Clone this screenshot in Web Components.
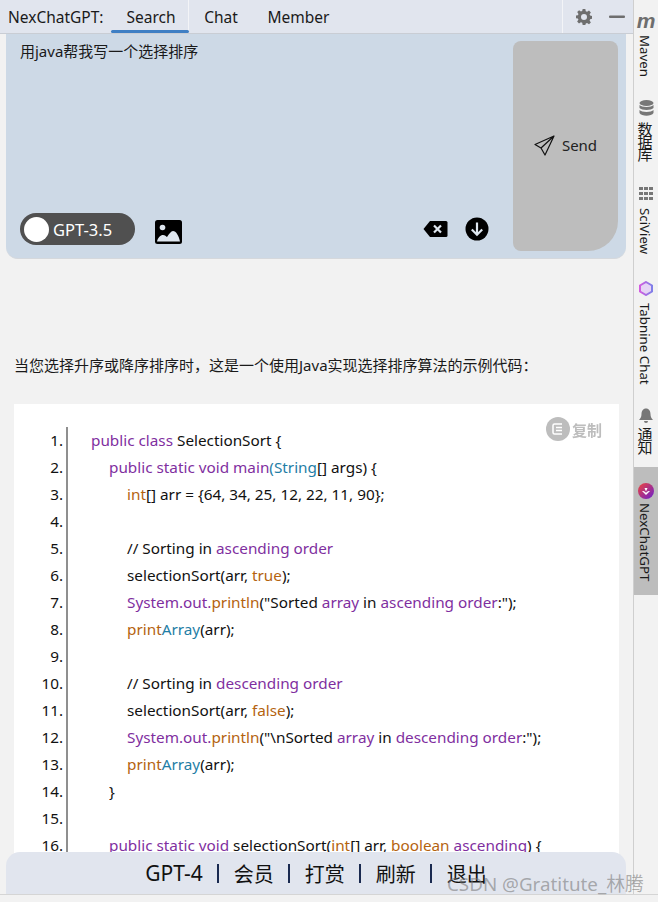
<!DOCTYPE html>
<html>
<head>
<meta charset="utf-8">
<style>
html, body { margin: 0; height: 100%; overflow: hidden; }
</style>
</head>
<body>
<nex-app></nex-app>
<script>
const FONT = '"Noto Sans", "Noto Sans CJK SC", sans-serif';

class NexHeader extends HTMLElement {
    constructor() {
        super();
        this.attachShadow({ mode: 'open' }).innerHTML = `<style>
            :host { display: flex; align-items: center; height: 33px; background: #e1e5ee; border-bottom: 1px solid #c9cdd4; font-size: 15.5px; color: #1a1a1a; flex: none; }
            .brand { padding-left: 8px; width: 103px; white-space: nowrap; }
            .tab { position: relative; height: 33px; display: flex; align-items: center; justify-content: center; box-sizing: border-box; }
            .search { width: 78px; padding-left: 3px; border-right: 1px solid #f3f4f7; }
            .search::after { content: ''; position: absolute; left: 0; right: -1px; bottom: 0; height: 3px; border-radius: 2px; background: #3f7fc4; }
            .chat { width: 64px; }
            .member { width: 91px; }
            .tools { margin-left: auto; height: 33px; width: 71px; border-left: 1px solid #f3f4f7; display: flex; align-items: center; gap: 17px; padding-left: 13px; box-sizing: border-box; }
        </style>
        <span class="brand">NexChatGPT:</span>
        <span class="tab search">Search</span>
        <span class="tab chat">Chat</span>
        <span class="tab member">Member</span>
        <div class="tools">
            <svg width="16" height="16" viewBox="0 0 24 24" fill="#6e6e6e"><path fill-rule="evenodd" d="M10 0h4l.7 3.400 1.900.8 2.900-1.900 2.800 2.800-1.900 2.900.8 1.900 3.400.7v4l-3.400.7-.8 1.900 1.900 2.900-2.800 2.800-2.900-1.900-1.900.8L14 24h-4l-.7-3.400-1.900-.8-2.900 1.900-2.800-2.800 1.900-2.900-.8-1.900L-.5 14v-4l3.400-.7.8-1.900-1.900-2.900 2.800-2.800 2.900 1.900 1.900-.8zM12 7.500a4.500 4.500 0 1 0 0 9 4.500 4.500 0 0 0 0-9z"/></svg>
            <svg width="16" height="4" viewBox="0 0 16 4"><rect width="16" height="2.500" y=".5" rx="1" fill="#6e6e6e"/></svg>
        </div>`;
    }
}

class NexComposer extends HTMLElement {
    constructor() {
        super();
        this.attachShadow({ mode: 'open' }).innerHTML = `<style>
            :host { display: flex; height: 225px; margin: 0 7px 0 6px; background: #cdd9e6; border-radius: 0 0 12px 12px; border-bottom: 1px solid #d5d8dc; box-sizing: border-box; padding: 7px 8px 7px 14px; flex: none; }
            .left { flex: 1; display: flex; flex-direction: column; min-width: 0; }
            .prompt { font-size: 15px; line-height: 20px; color: #1a1a1a; flex: 1; }
            .actions { display: flex; align-items: center; height: 32px; margin-bottom: 6px; }
            .switch { width: 115px; height: 32px; border-radius: 16px; background: #505050; color: #fff; font-size: 16.5px; display: flex; align-items: center; gap: 4px; padding-left: 4px; box-sizing: border-box; }
            .knob { width: 25px; height: 25px; background: #fff; border-radius: 50%; flex: none; }
            .pic { margin: 6px 0 0 20px; display: block; }
            .right { margin-left: auto; display: flex; align-items: center; gap: 17px; margin-right: 24px; }
            .send { width: 105px; padding-bottom: 2px; box-sizing: border-box; background: #bdbdbd; border-radius: 8px 8px 30px 8px; display: flex; align-items: center; justify-content: center; gap: 7px; font-size: 15px; color: #222; }
        </style>
        <div class="left">
            <div class="prompt">用java帮我写一个选择排序</div>
            <div class="actions">
                <div class="switch"><span class="knob"></span><span>GPT-3.5</span></div>
                <svg class="pic" width="27" height="24" viewBox="0 0 27 24"><rect width="27" height="24" rx="2.500" fill="#000"/><circle cx="7.500" cy="7.500" r="2.800" fill="#dfe7f0"/><path d="M2 21.500c1-4 3.500-6.500 6-6.500 2 0 3 1.500 4 2 2-3 4-6 6-6 3 0 6 5 7 10.500z" fill="#dfe7f0"/></svg>
                <div class="right">
                    <svg width="25" height="18" viewBox="0 0 25 18"><path d="M7 1h16a1.500 1.500 0 0 1 1.500 1.500v13A1.500 1.500 0 0 1 23 17H7L.5 9z" fill="#000"/><path d="M11 5.500l7 7M18 5.500l-7 7" stroke="#dfe7f0" stroke-width="2.200"/></svg>
                    <svg width="24" height="24" viewBox="0 0 24 24"><circle cx="12" cy="12" r="11.500" fill="#000"/><path d="M12 5.500v12M6.800 12.500l5.200 5.200 5.200-5.200" fill="none" stroke="#dfe7f0" stroke-width="2.200"/></svg>
                </div>
            </div>
        </div>
        <div class="send">
            <svg width="21" height="21" viewBox="0 0 21 21" fill="none" stroke="#111" stroke-width="1.200" stroke-linejoin="round"><path d="M20 1L1 9.500l6 3.500 4 7zM20 1L7 13"/></svg>
            <span>Send</span>
        </div>`;
    }
}

const KW = 'k', TY = 't', CL = 'c';
const CODE = [
    [0, [[KW, 'public class'], ['', ' SelectionSort {']]],
    [1, [[KW, 'public static void main'], [CL, '(String'], ['', '[] args) {']]],
    [2, [[TY, 'int'], ['', '[] arr = {64, 34, 25, 12, 22, 11, 90};']]],
    [0, []],
    [2, [['', '// Sorting in '], [KW, 'ascending order']]],
    [2, [['', 'selectionSort(arr, '], [TY, 'true'], ['', ');']]],
    [2, [[KW, 'System.out.'], [TY, 'println'], ['', '("Sorted '], [KW, 'array'], ['', ' in '], [KW, 'ascending order'], ['', ':");']]],
    [2, [[TY, 'print'], [CL, 'Array'], ['', '(arr);']]],
    [0, []],
    [2, [['', '// Sorting in '], [KW, 'descending order']]],
    [2, [['', 'selectionSort(arr, '], [TY, 'false'], ['', ');']]],
    [2, [[KW, 'System.out.'], [TY, 'println'], ['', '("\\nSorted '], [KW, 'array'], ['', ' in '], [KW, 'descending order'], ['', ':");']]],
    [2, [[TY, 'print'], [CL, 'Array'], ['', '(arr);']]],
    [1, [['', '}']]],
    [0, []],
    [1, [[KW, 'public static void'], ['', ' selectionSort('], [TY, 'int'], ['', '[] arr, '], [TY, 'boolean'], ['', ' '], [KW, 'ascending'], ['', ') {']]]
];

class NexCode extends HTMLElement {
    constructor() {
        super();
        const rows = CODE.map(row => {
            const spans = row[1].map(s => `<span class="${s[0]}">${s[1]}</span>`).join('');
            return `<li style="--indent:${row[0]}">${spans}</li>`;
        }).join('');
        this.attachShadow({ mode: 'open' }).innerHTML = `<style>
            :host { display: block; position: relative; background: #fff; margin: 0 14px; padding: 23px 0 0 0; font-size: 15.3px; color: #111; }
            ol { margin: 0 0 0 52px; padding: 0; border-left: 2px solid #8f8f8f; list-style: none; counter-reset: ln; }
            li { counter-increment: ln; height: 27px; line-height: 27px; padding-left: calc(23px + var(--indent) * 18px); position: relative; white-space: pre; }
            li::before { content: counter(ln) "."; position: absolute; right: calc(100% + 5px); }
            .k { color: #7f2f9f; } .t { color: #b4630f; } .c { color: #1f7ea6; }
            .copy { position: absolute; top: 13px; right: 17px; display: flex; align-items: center; gap: 2px; color: #bdbdbd; font-size: 15px; font-weight: 700; filter: blur(.5px); }
        </style>
        <div class="copy">
            <svg width="24" height="24" viewBox="0 0 24 24"><circle cx="12" cy="12" r="12" fill="#bdbdbd"/><path d="M16 7H8.500a1.500 1.500 0 0 0-1.500 1.500v7A1.500 1.500 0 0 0 8.500 17H16M10 10.500h6M10 13.500h6" fill="none" stroke="#fff" stroke-width="1.500"/></svg>
            <span>复制</span>
        </div>
        <ol>${rows}</ol>`;
    }
}

class NexFooter extends HTMLElement {
    constructor() {
        super();
        const items = ['GPT-4', '会员', '打赏', '刷新', '退出'];
        this.attachShadow({ mode: 'open' }).innerHTML = `<style>
            :host { position: absolute; left: 6px; right: 7px; bottom: 8px; height: 42px; background: #e1e5ee; border-radius: 14px 14px 0 0; display: flex; align-items: center; justify-content: center; font-size: 20px; color: #111; }
            .sep { width: 2px; height: 19px; background: #1a2a50; margin: 1px 14.500px 0; }
            .gpt { font-size: 21px; }
        </style>
        ${items.map((t, i) => `<span class="${i ? '' : 'gpt'}">${t}</span>`).join('<span class="sep"></span>')}`;
    }
}

class NexSidebar extends HTMLElement {
    constructor() {
        super();
        this.attachShadow({ mode: 'open' }).innerHTML = `<style>
            :host { display: flex; flex-direction: column; align-items: stretch; width: 24px; border-left: 1px solid #cfcfcf; background: #f2f2f2; font-size: 13.3px; color: #1a1a1a; flex: none; }
            .item { display: flex; flex-direction: column; align-items: center; box-sizing: border-box; flex: none; }
            .v { writing-mode: vertical-rl; line-height: 18px; margin-right: 3px; }
            .cjk { font-size: 15px; letter-spacing: -2.500px; text-orientation: upright; }
            .m { font: italic 700 21px/13px "Liberation Sans", sans-serif; color: #6e6e6e; height: 13px; }
            .active { background: #bdbdbd; }
            svg { flex: none; display: block; }
        </style>
        <div class="item" style="height:100px;padding-top:14px;gap:8px">
            <span class="m">m</span>
            <span class="v">Maven</span>
        </div>
        <div class="item" style="height:87px;gap:6px">
            <svg width="15" height="16" viewBox="0 0 15 16"><ellipse cx="7.500" cy="3" rx="7" ry="3" fill="#777"/><path d="M.5 5c2 2.500 12 2.500 14 0v3c-2 2.500-12 2.500-14 0zM.5 10c2 2.500 12 2.500 14 0v3c-2 3.500-12 3.500-14 0z" fill="#777"/></svg>
            <span class="v cjk">数据库</span>
        </div>
        <div class="item" style="height:94px;gap:8px">
            <svg width="14" height="13" viewBox="0 0 14 13" fill="#777"><path d="M0 0h14v3H0zM0 5h14v3H0zM0 10h14v3H0z"/><path d="M4 0h1v13H4zM9 0h1v13H9z" fill="#f2f2f2"/></svg>
            <span class="v">SciView</span>
        </div>
        <div class="item" style="height:127px;gap:7px">
            <svg width="14" height="15" viewBox="0 0 14 15" fill="none"><defs><linearGradient id="tn" x1="0" y1="0" x2="1" y2="0"><stop offset="0" stop-color="#d25be0"/><stop offset="1" stop-color="#7f7fe8"/></linearGradient></defs><path d="M7 1l6 3.500v6L7 14l-6-3.500v-6z" stroke="url(#tn)" stroke-width="2" fill="#e6d4f5"/></svg>
            <span class="v">Tabnine Chat</span>
        </div>
        <div class="item" style="height:59px;gap:3px">
            <svg width="14" height="16" viewBox="0 0 14 15" fill="#777"><path d="M7 0c3 0 4.500 2.500 4.500 5.500 0 3 1 4.500 2.500 6H0c1.500-1.500 2.500-3 2.500-6C2.500 2.500 4 0 7 0zM5 12.500h4a2 2 0 0 1-4 0z"/></svg>
            <span class="v cjk">通知</span>
        </div>
        <div class="item active" style="height:128px;padding-top:16px;gap:4px">
            <svg width="16" height="16" viewBox="0 0 16 16"><defs><linearGradient id="g" x1="0" y1="0" x2="1" y2="1"><stop offset="0" stop-color="#f0443a"/><stop offset="1" stop-color="#6a1fd0"/></linearGradient></defs><circle cx="8" cy="8" r="8" fill="url(#g)"/><path d="M8 12L4 8c2 0 3 .5 4 2 1-1.500 2-2 4-2zM8 8.500L6.500 5h3z" fill="#fff"/></svg>
            <span class="v">NexChatGPT</span>
        </div>`;
    }
}

class NexApp extends HTMLElement {
    constructor() {
        super();
        this.attachShadow({ mode: 'open' }).innerHTML = `<style>
            :host { display: flex; height: 902px; width: 658px; background: #f2f2f2; font-family: ${FONT}; overflow: hidden; position: relative; }
            main { flex: 1; min-width: 0; display: flex; flex-direction: column; position: relative; overflow: hidden; }
            .answer { margin: 96px 0 29px 14px; font-size: 15px; line-height: 20px; color: #1a1a1a; white-space: nowrap; }
            .strip { position: absolute; left: 0; right: 0; bottom: 0; height: 7px; border-top: 1px solid #d5d5d5; background: #f2f2f2; }
            .mark { position: absolute; left: 447px; top: 871px; font-size: 18.800px; line-height: 26px; color: rgba(120,120,120,.58); white-space: nowrap; }
        </style>
        <main>
            <nex-header></nex-header>
            <nex-composer></nex-composer>
            <div class="answer">当您选择升序或降序排序时，这是一个使用Java实现选择排序算法的示例代码：</div>
            <nex-code></nex-code>
            <nex-footer></nex-footer>
        </main>
        <nex-sidebar></nex-sidebar>
        <div class="strip"></div>
        <div class="mark">CSDN @Gratitute_林腾</div>`;
    }
}

customElements.define('nex-header', NexHeader);
customElements.define('nex-composer', NexComposer);
customElements.define('nex-code', NexCode);
customElements.define('nex-footer', NexFooter);
customElements.define('nex-sidebar', NexSidebar);
customElements.define('nex-app', NexApp);
</script>
</body>
</html>
